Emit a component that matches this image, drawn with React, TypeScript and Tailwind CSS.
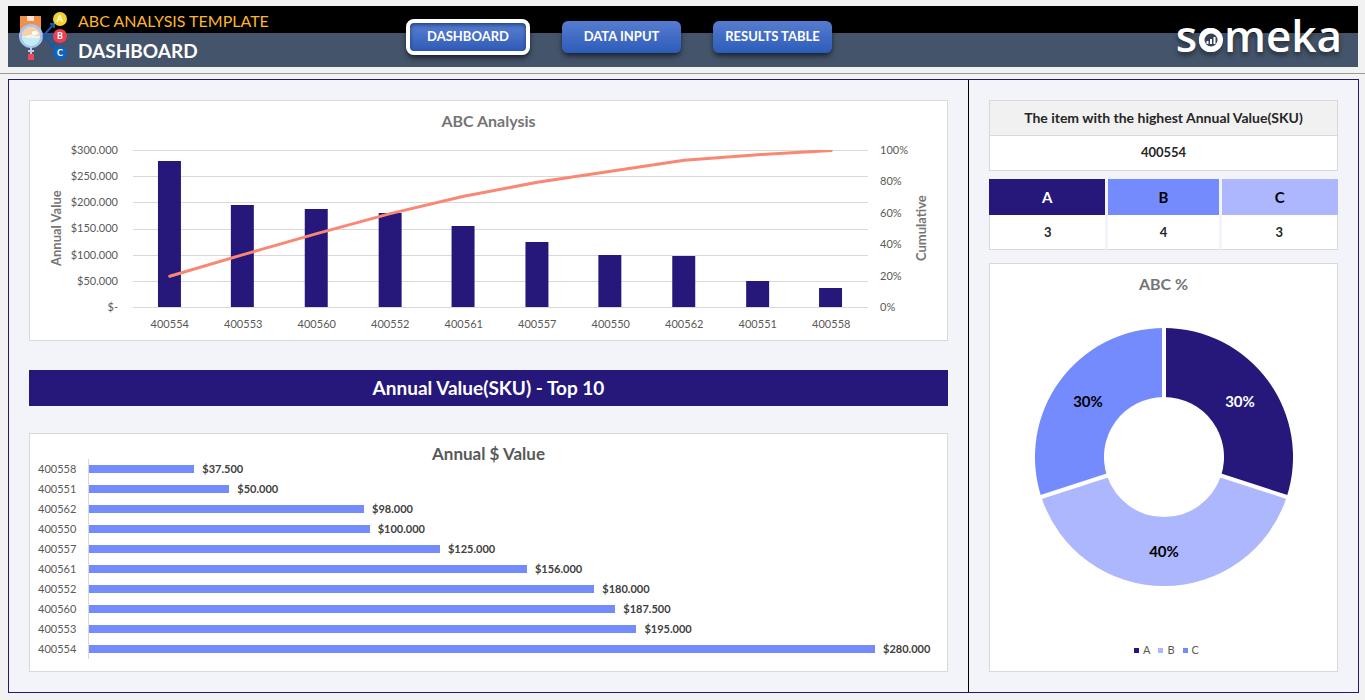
const items = [
  { sku: "400554", value: 280 },
  { sku: "400553", value: 195 },
  { sku: "400560", value: 187.5 },
  { sku: "400552", value: 180 },
  { sku: "400561", value: 156 },
  { sku: "400557", value: 125 },
  { sku: "400550", value: 100 },
  { sku: "400562", value: 98 },
  { sku: "400551", value: 50 },
  { sku: "400558", value: 37.5 },
];

const formatValue = (value: number) => `$${value.toFixed(3)}`;

const AbcIcon = () => (
  <svg width="52" height="52" viewBox="0 0 52 52" aria-hidden="true" className="shrink-0">
    <rect x="2" y="5" width="21" height="18" fill="#f0904a" />
    <rect x="9" y="5" width="7" height="5" fill="#fbe3cf" />
    <circle cx="13" cy="25" r="10.5" fill="#f7efe6" stroke="#a9c4ee" strokeWidth="3" />
    <path d="M4 25a9 9 0 0 1 18 0z" fill="#f9cfa6" />
    <path d="M4 26h18a9 9 0 0 1-18 0z" fill="#c3ecf3" />
    <path d="M8 25q5-3 10 0t4 0v2H8z" fill="#f3f1ec" />
    <ellipse cx="17" cy="22" rx="3" ry="2" fill="#fff" />
    <path d="M13 36v7M10 40h6" stroke="#b9cdf0" strokeWidth="2" />
    <rect x="10" y="43" width="6" height="6" fill="#f0455a" />
    <path d="M25 25L36 13M25 25h11M25 25l11 11M32 13h4v4M33 22l3 3-3 3M32 36h4v-4" fill="none" stroke="#1b57a6" strokeWidth="2" />
    <circle cx="42" cy="8" r="7" fill="#f8d22c" />
    <circle cx="42" cy="25" r="7" fill="#ee3f52" />
    <circle cx="42" cy="42" r="7" fill="#0f63bd" />
    <g fill="#fff" fontSize="9" fontWeight="700" textAnchor="middle">
      <text x="42" y="11">A</text>
      <text x="42" y="28">B</text>
      <text x="42" y="45">C</text>
    </g>
  </svg>
);

const Wordmark = () => (
  <a href="#someka" className="ml-auto mr-4 pb-1 flex font-['Open_Sans',sans-serif] text-[44px] leading-[60px] font-semibold text-white [text-shadow:0_3px_5px_rgb(0_0_0/0.5)]">
    s
    <span className="relative">
      o
      <svg width="24" height="24" viewBox="0 0 24 24" aria-hidden="true" className="absolute left-0.5 top-[23px]">
        <circle cx="12" cy="12" r="12" fill="#fff" />
        <circle cx="12" cy="12" r="6.500" fill="#34425a" />
        <path d="M8.500 16v-3M12 16v-5M15.500 16V9" stroke="#fff" strokeWidth="2" />
      </svg>
    </span>
    meka
  </a>
);

const Header = () => (
  <header className="mr-px h-[61px] flex items-center bg-[linear-gradient(#000_0_27px,#44546a_27px)]">
    <div className="w-[398px] shrink-0 flex items-center pl-2.5">
      <AbcIcon />
      <div className="ml-2">
        <p className="h-[27px] text-base leading-[29px] text-[#fbb52b]">ABC ANALYSIS TEMPLATE</p>
        <h1 className="h-[34px] text-[19px] leading-9 font-bold text-white">DASHBOARD</h1>
      </div>
    </div>
    <nav className="shrink-0 flex items-center gap-8 text-[13px] font-bold text-white">
      <button className="w-[124px] h-9 rounded-lg border-4 border-white bg-linear-to-b from-[#5a80d3] to-[#2f5bb5] shadow-md shadow-black/50 inset-shadow-sm inset-shadow-[#1f3f85]">DASHBOARD</button>
      <button className="w-[119px] h-8 rounded-md bg-linear-to-b from-[#567cd0] to-[#2c5cba] shadow-md shadow-black/50">DATA INPUT</button>
      <button className="w-[119px] h-8 rounded-md bg-linear-to-b from-[#567cd0] to-[#2c5cba] shadow-md shadow-black/50">RESULTS TABLE</button>
    </nav>
    <Wordmark />
  </header>
);

const ParetoChart = () => {
  const total = items.reduce((sum, item) => sum + item.value, 0);
  const step = 736 / items.length;
  let running = 0;
  const points = items.map((item, idx) => {
    running += item.value;
    return `${(idx + 0.5) * step},${157.5 - (running / total) * 157}`;
  });

  return (
    <section className="h-[241px] border border-[#d9d9d9] bg-white">
      <h2 className="pt-2.5 text-center text-base leading-5 font-bold text-[#757575]">ABC Analysis</h2>
      <div className="mt-[11px] flex text-[11px] leading-4 text-[#595959]">
        <p className="ml-4 h-[173px] w-5 rotate-180 text-center text-[13px] leading-5 font-bold text-[#757575] [writing-mode:vertical-rl]">Annual Value</p>
        <div className="h-[173px] w-[52px] flex flex-col justify-between text-right">
          {["$300.000", "$250.000", "$200.000", "$150.000", "$100.000", "$50.000", "$-"].map((label) => (
            <span key={label}>{label}</span>
          ))}
        </div>
        <div className="ml-[15px] pt-2 flex-1">
          <svg viewBox="0 0 736 158" preserveAspectRatio="none" className="block w-full h-[158px]" role="img" aria-label="Annual value and cumulative share by SKU">
            {[0, 1, 2, 3, 4, 5, 6].map((n) => (
              <path key={n} d={`M0 ${Math.round((n * 157) / 6) + 0.5}h736`} stroke="#d9d9d9" />
            ))}
            {items.map((item, idx) => (
              <rect
                key={item.sku}
                x={Math.round((idx + 0.5) * step - 12)}
                y={Math.ceil(157 - (item.value / 300) * 157)}
                width="23"
                height={Math.floor((item.value / 300) * 157)}
                fill="#25187a"
              />
            ))}
            <polyline points={points.join(" ")} fill="none" stroke="#f98774" strokeWidth="3" strokeLinejoin="round" strokeLinecap="round" />
          </svg>
          <div className="mt-2 flex text-center">
            {items.map((item) => (
              <span key={item.sku} className="flex-1">{item.sku}</span>
            ))}
          </div>
        </div>
        <div className="ml-3 h-[173px] w-[31px] flex flex-col justify-between">
          {["100%", "80%", "60%", "40%", "20%", "0%"].map((label) => (
            <span key={label}>{label}</span>
          ))}
        </div>
        <p className="mr-4 h-[173px] w-5 rotate-180 text-center text-[13px] leading-5 font-bold text-[#757575] [writing-mode:vertical-rl]">Cumulative</p>
      </div>
    </section>
  );
};

const TopTenChart = () => (
  <section className="h-[239px] border border-[#d9d9d9] bg-white">
    <h2 className="pt-2.5 text-center text-[17px] leading-5 font-bold text-[#595959]">Annual $ Value</h2>
    <ul className="-mt-[5px] text-[11px] leading-5">
      {[...items].reverse().map((item) => (
        <li key={item.sku} className="h-5 flex">
          <span className="w-[58px] shrink-0 pl-2 text-[#595959]">{item.sku}</span>
          <div className="flex-1 flex items-center gap-2 border-l border-[#d9d9d9] pr-[72px]">
            <div className="h-2 shrink-0 bg-[#748bfc]" style={{ width: `${(item.value / 280) * 100}%` }} />
            <span className="font-bold text-[#404040]">{formatValue(item.value)}</span>
          </div>
        </li>
      ))}
    </ul>
  </section>
);

const DonutChart = () => (
  <section className="mt-[13px] h-[409px] flex flex-col items-center border border-[#d9d9d9] bg-white">
    <h2 className="pt-2.5 text-base leading-5 font-bold text-[#757575]">ABC %</h2>
    <svg width="260" height="260" viewBox="-130 -130 260 260" className="mt-[33px]" role="img" aria-label="Share of items in classes A, B and C">
      <path d="M0-129A129 129 0 0 1 122.700 39.900L57.100 18.500A60 60 0 0 0 0-60z" fill="#25187a" />
      <path d="M122.700 39.900A129 129 0 0 1-122.700 39.900L-57.100 18.500A60 60 0 0 0 57.100 18.500z" fill="#adb7fe" />
      <path d="M-122.700 39.900A129 129 0 0 1 0-129V-60A60 60 0 0 0-57.100 18.500z" fill="#748bfe" />
      <path d="M0-55V-130M52 17L126 41M-52 17L-126 41" stroke="#fff" strokeWidth="4" />
      <g fontSize="15" fontWeight="700" textAnchor="middle">
        <text x="76" y="-50" fill="#fff">30%</text>
        <text x="-76" y="-50">30%</text>
        <text x="0" y="100">40%</text>
      </g>
    </svg>
    <ul className="mt-[55px] pl-1.5 flex gap-2 text-[11px] leading-4 text-[#595959]">
      <li className="flex items-center gap-1"><span className="size-[5px] bg-[#25187a]" />A</li>
      <li className="flex items-center gap-1"><span className="size-[5px] bg-[#adb7fe]" />B</li>
      <li className="flex items-center gap-1"><span className="size-[5px] bg-[#748bfe]" />C</li>
    </ul>
  </section>
);

const Summary = () => (
  <>
    <table className="w-full border-collapse text-center text-[13px] text-[#262626]">
      <thead className="text-sm">
        <tr><th className="h-[35px] border border-[#d9d9d9] bg-[#f1f1f1] py-0 font-bold">The item with the highest Annual Value(SKU)</th></tr>
      </thead>
      <tbody>
        <tr><td className="h-[35px] border border-[#d9d9d9] bg-white py-0 font-bold">400554</td></tr>
      </tbody>
    </table>
    <table className="mt-2 w-full table-fixed border-separate border-spacing-0 text-center font-bold">
      <thead className="text-[15px] leading-5">
        <tr>
          <th className="h-9 bg-[#25187a] text-white">A</th>
          <th className="border-x-[3px] border-[#f3f4fa] bg-[#748bfe] text-black">B</th>
          <th className="bg-[#adb7fe] text-black">C</th>
        </tr>
      </thead>
      <tbody className="text-[13px] leading-5 text-[#262626]">
        <tr>
          <td className="h-[35px] border-b border-l border-[#d9d9d9] bg-white">3</td>
          <td className="border-x-[3px] border-b border-x-[#f3f4fa] border-b-[#d9d9d9] bg-white">4</td>
          <td className="border-b border-r border-[#d9d9d9] bg-white">3</td>
        </tr>
      </tbody>
    </table>
  </>
);

const App = () => {
  return (
    <div className="min-h-screen bg-[#f2f2f2] pt-1.5 font-[Lato,Carlito,sans-serif]">
      <div className="border-b border-[#999] pl-2 pr-1.5 pb-1.5">
        <Header />
      </div>
      <main className="mt-[5px] ml-2 mr-1.5 flex border border-[#25187a] bg-[#f3f4fa]">
        <div className="flex-1 min-w-0 p-5">
          <ParetoChart />
          <h2 className="mt-[29px] mb-[27px] bg-[#25187a] text-center text-[19px] leading-9 font-bold text-white">Annual Value(SKU) - Top 10</h2>
          <TopTenChart />
        </div>
        <aside className="w-[390px] shrink-0 border-l border-black p-5">
          <Summary />
          <DonutChart />
        </aside>
      </main>
    </div>
  );
};

export default App;
